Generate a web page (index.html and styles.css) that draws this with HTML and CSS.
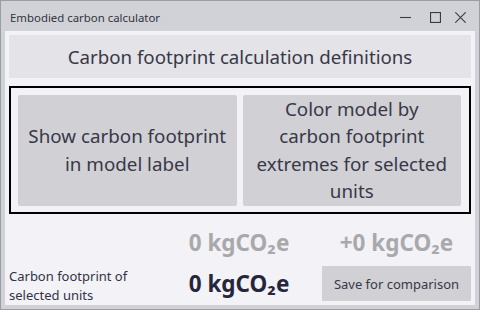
FILE: index.html
```html
<!DOCTYPE html>
<html>
<head>
<meta charset="utf-8">
<link rel="stylesheet" href="styles.css">
</head>
<body>
<div class="window">
  <div class="titlebar">
    <span class="title">Embodied carbon calculator</span>
    <div class="controls">
      <svg class="ctl min" width="11" height="11" viewBox="0 0 11 11"><path d="M0 5.5H11" stroke="#3a3a48" stroke-width="1.1"/></svg>
      <svg class="ctl max" width="11" height="11" viewBox="0 0 11 11"><rect x="0.55" y="0.55" width="9.9" height="9.9" fill="none" stroke="#3a3a48" stroke-width="1.1"/></svg>
      <svg class="ctl close" width="11" height="11" viewBox="0 0 11 11"><path d="M0.3 0.3L10.7 10.7M10.7 0.3L0.3 10.7" stroke="#3a3a48" stroke-width="1.1"/></svg>
    </div>
  </div>
  <div class="content">
    <div class="btn header-btn">Carbon footprint calculation definitions</div>
    <div class="box">
      <div class="btn big-btn">Show carbon footprint<br>in model label</div>
      <div class="btn big-btn">Color model by<br>carbon footprint<br>extremes for selected<br>units</div>
    </div>
    <div class="stats">
      <div></div>
      <div class="val faded">0 kgCO₂e</div>
      <div class="val faded col3">+0 kgCO₂e</div>
      <div class="label">Carbon footprint of<br>selected units</div>
      <div class="val strong">0 kgCO₂e</div>
      <div class="btn save-btn col3">Save for comparison</div>
    </div>
  </div>
</div>
</body>
</html>
```
FILE: styles.css
```css
html, body {
  margin: 0;
  padding: 0;
}
body {
  font-family: "Noto Sans", "Open Sans", sans-serif;
  color: #383848;
}
.window {
  width: 480px;
  height: 310px;
  box-sizing: border-box;
  border: 1px solid #9c9ca4;
  background: #d1d2d7;
  display: flex;
  flex-direction: column;
}
.titlebar {
  height: 30px;
  flex-shrink: 0;
  display: flex;
  align-items: center;
  justify-content: space-between;
  padding: 0 13px 0 9px;
}
.title {
  font-size: 11.4px;
  color: #333340;
  margin-top: 2px;
}
.controls {
  display: flex;
  align-items: center;
  margin-top: 2px;
}
.ctl {
  display: block;
}
.max {
  margin-left: 19px;
}
.close {
  margin-left: 14px;
}
.content {
  flex: 1;
  margin: 0 4px 4px 4px;
  background: #f2f2f7;
  padding: 4px;
  display: flex;
  flex-direction: column;
  min-height: 0;
}
.btn {
  display: flex;
  align-items: center;
  justify-content: center;
  text-align: center;
  color: #383848;
}
.header-btn {
  height: 43px;
  flex-shrink: 0;
  background: #e3e3e8;
  font-size: 18.7px;
  margin-bottom: 8px;
}
.box {
  height: 128px;
  flex-shrink: 0;
  box-sizing: border-box;
  border: 2px solid #000;
  padding: 7px 8px 6px 7px;
  display: flex;
  gap: 6px;
}
.big-btn {
  flex: 1;
  background: #d0d0d5;
  border-radius: 2px;
  font-size: 18.8px;
  line-height: 27.5px;
}
.stats {
  height: 87px;
  flex-shrink: 0;
  box-sizing: border-box;
  display: grid;
  grid-template-columns: 153px 154px 1fr;
  grid-template-rows: 30px 35px;
  row-gap: 8px;
  padding-top: 14px;
}
.col3 {
  margin-left: 6px;
}
.val {
  font-weight: bold;
  font-size: 22.5px;
  line-height: 30px;
  display: flex;
  align-items: center;
  justify-content: center;
}
.faded {
  color: #a9a9ab;
}
.strong {
  color: #26263a;
}
.label {
  font-size: 13px;
  line-height: 19px;
  color: #333345;
  align-self: center;
  margin-top: 4px;
}
.save-btn {
  background: #d0d0d5;
  font-size: 13px;
  border-radius: 1px;
}
```
